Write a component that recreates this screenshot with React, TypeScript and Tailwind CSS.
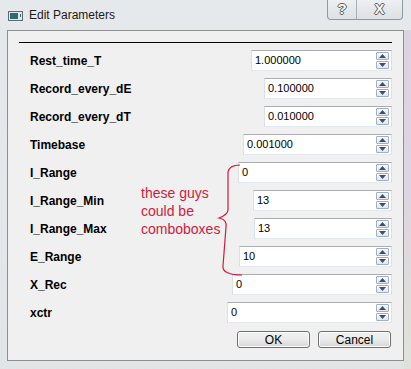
import React from "react";

const rows = [
  { label: "Rest_time_T", value: "1.000000", width: "w-[141px]" },
  { label: "Record_every_dE", value: "0.100000", width: "w-[128px]" },
  { label: "Record_every_dT", value: "0.010000", width: "w-[128px]" },
  { label: "Timebase", value: "0.001000", width: "w-[149px]" },
  { label: "I_Range", value: "0", width: "w-[154px]" },
  { label: "I_Range_Min", value: "13", width: "w-[139px]" },
  { label: "I_Range_Max", value: "13", width: "w-[138px]" },
  { label: "E_Range", value: "10", width: "w-[153px]" },
  { label: "X_Rec", value: "0", width: "w-[160px]" },
  { label: "xctr", value: "0", width: "w-[165px]" },
];

function SpinBox({ value, width }: { value: string; width: string }) {
  return (
    <div
      className={`${width} flex h-[21px] items-center border border-t-[#abadb3] border-l-[#dbdfe6] border-r-[#dbdfe6] border-b-[#e3e9ef] bg-white pl-[3px] pr-[2px]`}
    >
      <span className="flex-1 text-[11px] leading-none text-black">{value}</span>
      <div className="flex flex-col gap-px">
        <SpinArrow up />
        <SpinArrow />
      </div>
    </div>
  );
}

function SpinArrow({ up }: { up?: boolean }) {
  return (
    <div className="flex h-[8px] w-[13px] items-center justify-center rounded-[1px] border border-[#9fb0c4] bg-gradient-to-b from-[#f8f9fb] to-[#e2e7ee]">
      <svg viewBox="0 0 7 4" className="h-[4px] w-[7px]">
        {up ? <path d="M0 4 L3.5 0 L7 4 Z" fill="#3d4f66" /> : <path d="M0 0 L3.5 4 L7 0 Z" fill="#3d4f66" />}
      </svg>
    </div>
  );
}

function WinButton({ children }: { children: React.ReactNode }) {
  return (
    <button className="h-[17px] w-[73px] rounded-[3px] border border-[#707070] bg-gradient-to-b from-[#f2f2f2] via-[#ebebeb] to-[#d6d6d6] text-[12px] leading-none text-black shadow-[inset_0_0_0_1px_#fcfcfc]">
      {children}
    </button>
  );
}

export default function App() {
  return (
    <div
      className="relative h-[369px] w-[411px] overflow-hidden bg-gradient-to-b from-[#e6e9ec] to-[#e2e5e8]"
      style={{ fontFamily: '"Liberation Sans", Arial, sans-serif' }}
    >
      {/* blurred desktop showing through the frame */}
      <div className="absolute right-0 top-[30px] h-[339px] w-[7px] bg-gradient-to-b from-[#d9d4de] via-[#ddd6e0] to-[#dfe2d9]" />

      {/* title bar */}
      <div className="flex h-[30px] items-center">
        <div className="ml-[8px] mt-[1px] flex h-[10px] w-[15px] items-center border border-[#5c6b72] bg-[#dfe6ea]">
          <div className="ml-[1px] h-[6px] w-[8px] bg-[#2f6b6e]" />
          <div className="ml-[2px] h-[3px] w-[1px] bg-[#2f6b6e]" />
        </div>
        <span className="ml-[6px] text-[12px] leading-none text-[#1b1b1b]">Edit Parameters</span>
        <div className="mb-auto ml-auto mr-[8px] flex h-[20px] w-[76px] overflow-hidden rounded-b-[4px] border border-t-0 border-[#8f99a2] bg-gradient-to-b from-[#eef0f2] to-[#dde1e4]">
          <div className="flex w-[29px] items-center justify-center border-r border-[#a8b0b7] text-[15px] font-bold text-[#f7f7f7] [text-shadow:1px_0_0_#5a5a5a,-1px_0_0_#5a5a5a,0_1px_0_#5a5a5a,0_-1px_0_#5a5a5a]">
            ?
          </div>
          <div className="flex flex-1 items-center justify-center text-[15px] font-bold text-[#f7f7f7] [text-shadow:1px_0_0_#5a5a5a,-1px_0_0_#5a5a5a,0_1px_0_#5a5a5a,0_-1px_0_#5a5a5a]">
            X
          </div>
        </div>
      </div>

      {/* content panel */}
      <div className="relative ml-[7px] flex h-[331px] w-[397px] flex-col border border-[#8e8f8f] bg-[#f0f0f0]">
        <div className="ml-[11px] mt-[11px] h-px w-[373px] bg-black" />
        <div className="mt-[7px] flex flex-col gap-[7px]">
          {rows.map((r) => (
            <div key={r.label} className="flex h-[21px] items-center pl-[22px] pr-[11px]">
              <span className="flex-1 text-[12px] font-bold leading-none text-black">{r.label}</span>
              <SpinBox value={r.value} width={r.width} />
            </div>
          ))}
        </div>
        <div className="mr-[12px] mt-[8px] flex justify-end gap-[8px]">
          <WinButton>OK</WinButton>
          <WinButton>Cancel</WinButton>
        </div>
      </div>

      {/* red annotation */}
      <div className="absolute left-[141px] top-[184px] text-[14px] leading-[18px] text-[#d21a3c]">
        <div>these guys</div>
        <div>could be</div>
        <div>comboboxes</div>
      </div>
      <svg className="absolute left-0 top-0 h-[369px] w-[411px]" viewBox="0 0 411 369" fill="none">
        <path
          d="M240 165 C233 165 229 167 228 172 L228 210 C228 214 224 216 219 218 C224 219 227 221 226 227 L223 266 C222 272 230 275 242 275"
          stroke="#d21a3c"
          strokeWidth="1.2"
        />
      </svg>
    </div>
  );
}
